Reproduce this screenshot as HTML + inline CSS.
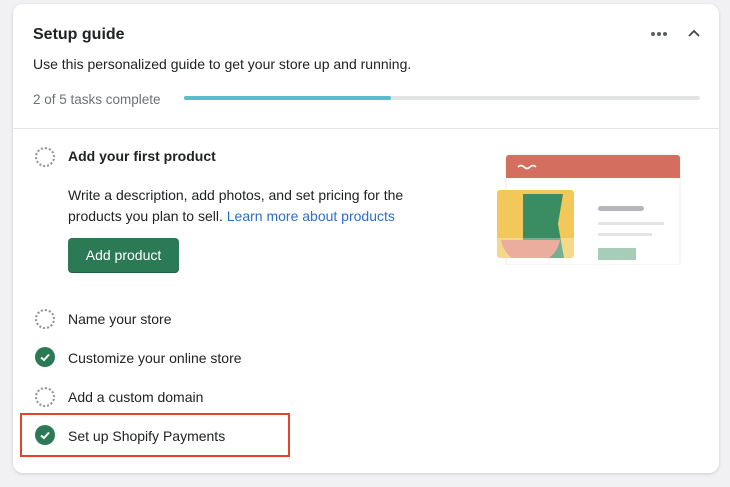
<!DOCTYPE html>
<html><head><style>
body{margin:0;width:730px;height:487px;background:#f1f1f3;font-family:"Liberation Sans",sans-serif;position:relative;overflow:hidden;color:#202223}
.card{position:absolute;left:13px;top:4px;width:706px;height:469px;background:#fff;border-radius:10px;box-shadow:0 1px 3px rgba(0,0,0,.15)}
.a{position:absolute;white-space:nowrap}
.ring{position:absolute;width:16px;height:16px;border:2px dotted #8c9196;border-radius:50%}
.chk{position:absolute;width:20px;height:20px;border-radius:50%;background:#2b7a55}
</style></head><body>
<div class="card"></div>
<div class="a" style="left:33px;top:26px;font-size:16px;font-weight:bold;color:#202223">Setup guide</div>
<svg class="a" style="left:650px;top:30px" width="18" height="8"><circle cx="3" cy="4" r="2" fill="#5c5f62"/><circle cx="9" cy="4" r="2" fill="#5c5f62"/><circle cx="15" cy="4" r="2" fill="#5c5f62"/></svg>
<svg class="a" style="left:687px;top:28px" width="14" height="10"><path d="M2 8 L7 3 L12 8" stroke="#44474a" stroke-width="1.8" fill="none"/></svg>
<div class="a" style="left:33px;top:56px;font-size:14px;color:#202223">Use this personalized guide to get your store up and running.</div>
<div class="a" style="left:33px;top:92px;font-size:13.5px;color:#6d7175">2 of 5 tasks complete</div>
<div class="a" style="left:184px;top:96px;width:516px;height:4px;background:#e1e3e5;border-radius:2px"></div>
<div class="a" style="left:184px;top:96px;width:207px;height:4px;background:#5bbccc;border-radius:2px"></div>
<div class="a" style="left:13px;top:128px;width:706px;height:1px;background:#e1e3e5"></div>

<div class="ring" style="left:35px;top:147px"></div>
<div class="a" style="left:68px;top:148px;font-size:14px;font-weight:bold">Add your first product</div>
<div class="a" style="left:68px;top:185px;font-size:14px;line-height:21px">Write a description, add photos, and set pricing for the<br>products you plan to sell. <span style="color:#2c6ecb">Learn more about products</span></div>
<div class="a" style="left:68px;top:238px;width:111px;height:35px;background:#2b7a55;border-radius:4px;color:#fff;font-size:14px;line-height:35px;text-align:center;box-shadow:inset 0 -1px 0 rgba(0,0,0,.2)">Add product</div>

<svg class="a" style="left:490px;top:150px" width="200" height="115">
<defs><clipPath id="c"><rect x="7" y="40" width="77" height="68"/></clipPath></defs>
<rect x="16" y="5" width="174" height="110" rx="3" fill="#fff" stroke="#eee"/>
<path d="M16 8 a3 3 0 0 1 3 -3 h168 a3 3 0 0 1 3 3 v20 h-174z" fill="#d46e5e"/>
<path d="M28 17 q3 -3 6 0 t6 0 t6 0" stroke="#fff" stroke-width="1.6" fill="none"/>
<rect x="108" y="56" width="46" height="5" rx="2.5" fill="#b5b7bb"/>
<rect x="108" y="72" width="66" height="3" fill="#e3e4e6"/>
<rect x="108" y="83" width="54" height="3" fill="#e3e4e6"/>
<rect x="108" y="98" width="38" height="12" fill="#a5cdb7"/>
<g clip-path="url(#c)">
<rect x="7" y="40" width="77" height="68" rx="3" fill="#f2c85b"/>
<path d="M33 44 h40 l-5 30 l6 34 h-41z" fill="#3a8d63"/>
<path d="M11 90 h59 a30 30 0 0 1 -59 0z" fill="#e38a74"/>
<rect x="7" y="88" width="77" height="20" fill="rgba(255,255,255,.3)"/>
</g>
</svg>

<div class="ring" style="left:35px;top:309px"></div>
<div class="a" style="left:68px;top:311px;font-size:14px">Name your store</div>
<div class="chk" style="left:35px;top:347px"><svg width="20" height="20"><path d="M6 10.5 L9 13 L14 7.5" stroke="#fff" stroke-width="2" fill="none"/></svg></div>
<div class="a" style="left:68px;top:350px;font-size:14px">Customize your online store</div>
<div class="ring" style="left:35px;top:387px"></div>
<div class="a" style="left:68px;top:389px;font-size:14px">Add a custom domain</div>
<div class="chk" style="left:35px;top:425px"><svg width="20" height="20"><path d="M6 10.5 L9 13 L14 7.5" stroke="#fff" stroke-width="2" fill="none"/></svg></div>
<div class="a" style="left:68px;top:428px;font-size:14px">Set up Shopify Payments</div>
<div class="a" style="left:20px;top:413px;width:266px;height:40px;border:2px solid #e8412c"></div>
</body></html>
